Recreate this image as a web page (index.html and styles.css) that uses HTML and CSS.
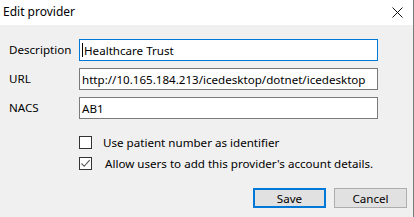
FILE: index.html
```html
<!DOCTYPE html>
<html>
  <head>
    <title>Edit provider</title>
    <meta charset="UTF-8" />
    <link rel="stylesheet" href="styles.css">
  </head>

  <body>
    <div class="window">
      <div class="titlebar">
        <div class="title">Edit provider</div>
        <div class="close">
          <svg width="11" height="11" viewBox="0 0 11 11">
            <path d="M0.5 0.5 L10.5 10.5 M10.5 0.5 L0.5 10.5" stroke="#111" stroke-width="1" fill="none" />
          </svg>
        </div>
      </div>

      <div class="content">
        <div class="fields">
          <label class="label">Description</label>
          <div class="field focused"><span class="caret"></span>Healthcare Trust</div>
          <label class="label">URL</label>
          <div class="field">http://10.165.184.213/icedesktop/dotnet/icedesktop</div>
          <label class="label">NACS</label>
          <div class="field">AB1</div>
        </div>

        <div class="options">
          <div class="option">
            <span class="checkbox"></span>
            <span class="option-text">Use patient number as identifier</span>
          </div>
          <div class="option">
            <span class="checkbox">
              <svg width="11" height="11" viewBox="0 0 11 11">
                <path d="M1.5 5.5 L4.2 8.3 L9.6 2.2" stroke="#555" stroke-width="1.1" fill="none" />
              </svg>
            </span>
            <span class="option-text checked">Allow users to add this provider's account details.</span>
          </div>
        </div>

        <div class="buttons">
          <div class="button default">Save</div>
          <div class="button">Cancel</div>
        </div>
      </div>
    </div>
  </body>
</html>
```

FILE: styles.css
```css
* {
  box-sizing: border-box;
}

body {
  margin: 0;
  font-family: "Noto Sans", "Open Sans", sans-serif;
  font-size: 11.6px;
  color: #000;
  background: #f0f0f0;
}

.window {
  width: 414px;
  height: 217px;
  border-right: 1px solid #7a7a7a;
  background: #f0f0f0;
  display: flex;
  flex-direction: column;
}

.titlebar {
  height: 25px;
  background: #fff;
  display: flex;
  align-items: center;
  justify-content: space-between;
  padding: 0 10px 0 3px;
}

.title {
  font-size: 12px;
  line-height: 16px;
  padding-bottom: 1px;
}

.close {
  width: 11px;
  height: 11px;
  display: flex;
}

.content {
  padding: 14px 0 0 9px;
}

.fields {
  display: grid;
  grid-template-columns: 70px 299px;
  row-gap: 7px;
  align-items: center;
}

.label {
  line-height: 16px;
}

.field {
  height: 22px;
  background: #fff;
  border: 1px solid #7a7a7a;
  padding: 0 2px;
  line-height: 19px;
  white-space: nowrap;
  overflow: hidden;
  display: flex;
  align-items: center;
}

.field.focused {
  border-color: #0078d7;
}

.caret {
  width: 1px;
  height: 14px;
  background: #000;
  margin-right: 1px;
}

.options {
  padding: 17px 0 0 70px;
  display: flex;
  flex-direction: column;
  gap: 8px;
}

.option {
  display: flex;
  align-items: center;
  height: 13px;
}

.checkbox {
  width: 13px;
  height: 13px;
  border: 1px solid #333;
  background: #fff;
  display: flex;
  align-items: center;
  justify-content: center;
}

.option-text {
  margin-left: 11px;
  line-height: 16px;
}

.option-text.checked {
  margin-left: 13px;
}

.buttons {
  display: flex;
  justify-content: flex-end;
  gap: 8px;
  padding: 18px 6px 0 0;
}

.button {
  width: 73px;
  height: 20px;
  background: #e1e1e1;
  border: 1px solid #adadad;
  display: flex;
  align-items: center;
  justify-content: center;
}

.button.default {
  border: 2px solid #0078d7;
}
```
